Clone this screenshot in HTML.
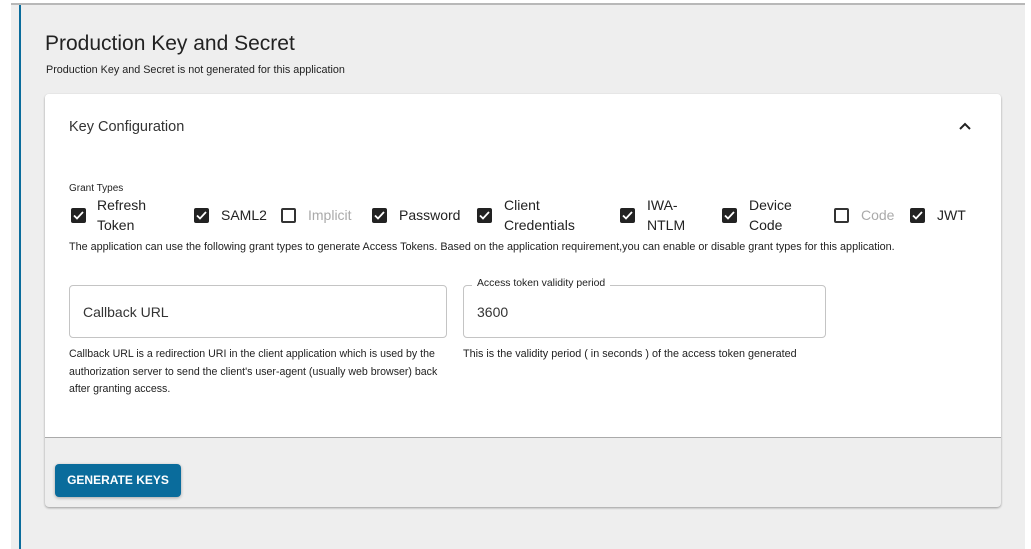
<!DOCTYPE html>
<html><head><meta charset="utf-8"><style>
*{margin:0;padding:0;box-sizing:border-box}
body{width:1031px;height:549px;background:#fff;font-family:"Liberation Sans",sans-serif;color:#222;position:relative;overflow:hidden}
.a{position:absolute;white-space:nowrap}
.cb{position:absolute;width:15px;height:15px;border-radius:2px;background:#222;top:208px}
.cb svg{position:absolute;left:2px;top:3px}
.cb.e{background:#fff;border:2px solid #333}
.lb{position:absolute;font-size:14px;line-height:20px;color:#222}
.lb.g{color:#aaa}
</style></head><body>
<div class="a" style="left:11px;top:3px;width:1014px;height:546px;background:#eeeeee;border-top:2px solid #b8b8b8"></div>
<div class="a" style="left:19px;top:5px;width:2px;height:544px;background:#0a6c9c"></div>
<div class="a" style="left:45px;top:32px;font-size:21px;color:#222">Production Key and Secret</div>
<div class="a" style="left:46px;top:64px;font-size:10.8px;color:#222">Production Key and Secret is not generated for this application</div>
<div class="a" style="left:45px;top:94px;width:956px;height:413px;background:#eeeeee;border-radius:4px;box-shadow:0 1px 2px rgba(0,0,0,.35)"></div>
<div class="a" style="left:45px;top:94px;width:956px;height:344px;background:#fff;border-radius:4px 4px 0 0;border-bottom:1px solid #aaa"></div>
<div class="a" style="left:69px;top:119px;font-size:14.5px;color:#333">Key Configuration</div>
<svg class="a" style="left:958px;top:121px" width="14" height="10"><path d="M2 8 L7 3 L12 8" stroke="#222" stroke-width="2" fill="none"/></svg>
<div class="a" style="left:69px;top:183px;font-size:10px">Grant Types</div>

<div class="cb" style="left:71px"><svg width="11" height="9"><path d="M1 4.5 L4 7.5 L10 1" stroke="#fff" stroke-width="1.8" fill="none"/></svg></div>
<div class="lb" style="left:97px;top:195px">Refresh<br>Token</div>
<div class="cb" style="left:194px"><svg width="11" height="9"><path d="M1 4.5 L4 7.5 L10 1" stroke="#fff" stroke-width="1.8" fill="none"/></svg></div>
<div class="lb" style="left:221px;top:205px">SAML2</div>
<div class="cb e" style="left:281px"></div>
<div class="lb g" style="left:308px;top:205px">Implicit</div>
<div class="cb" style="left:372px"><svg width="11" height="9"><path d="M1 4.5 L4 7.5 L10 1" stroke="#fff" stroke-width="1.8" fill="none"/></svg></div>
<div class="lb" style="left:399px;top:205px">Password</div>
<div class="cb" style="left:477px"><svg width="11" height="9"><path d="M1 4.5 L4 7.5 L10 1" stroke="#fff" stroke-width="1.8" fill="none"/></svg></div>
<div class="lb" style="left:504px;top:195px">Client<br>Credentials</div>
<div class="cb" style="left:620px"><svg width="11" height="9"><path d="M1 4.5 L4 7.5 L10 1" stroke="#fff" stroke-width="1.8" fill="none"/></svg></div>
<div class="lb" style="left:647px;top:195px">IWA-<br>NTLM</div>
<div class="cb" style="left:722px"><svg width="11" height="9"><path d="M1 4.5 L4 7.5 L10 1" stroke="#fff" stroke-width="1.8" fill="none"/></svg></div>
<div class="lb" style="left:749px;top:195px">Device<br>Code</div>
<div class="cb e" style="left:834px"></div>
<div class="lb g" style="left:861px;top:205px">Code</div>
<div class="cb" style="left:910px"><svg width="11" height="9"><path d="M1 4.5 L4 7.5 L10 1" stroke="#fff" stroke-width="1.8" fill="none"/></svg></div>
<div class="lb" style="left:937px;top:205px">JWT</div>

<div class="a" style="left:69px;top:241px;font-size:10.8px">The application can use the following grant types to generate Access Tokens. Based on the application requirement,you can enable or disable grant types for this application.</div>

<div class="a" style="left:69px;top:285px;width:378px;height:53px;border:1px solid #c4c4c4;border-radius:4px"></div>
<div class="a" style="left:83px;top:304px;font-size:14px;color:#333">Callback URL</div>
<div class="a" style="left:69px;top:346px;font-size:10.6px;line-height:17.5px;white-space:normal;width:385px">Callback URL is a redirection URI in the client application which is used by the authorization server to send the client's user-agent (usually web browser) back after granting access.</div>

<div class="a" style="left:463px;top:285px;width:363px;height:53px;border:1px solid #c4c4c4;border-radius:4px"></div>
<div class="a" style="left:472px;top:278px;padding:0 5px;background:#fff;font-size:10.4px">Access token validity period</div>
<div class="a" style="left:477px;top:304px;font-size:14px;color:#333">3600</div>
<div class="a" style="left:463px;top:348px;font-size:10.8px">This is the validity period ( in seconds ) of the access token generated</div>

<div class="a" style="left:55px;top:464px;width:126px;height:33px;background:#0a6c9c;border-radius:4px;box-shadow:0 1px 3px rgba(0,0,0,.3);color:#fff;font-size:12px;font-weight:bold;text-align:center;line-height:33px">GENERATE KEYS</div>
</body></html>
